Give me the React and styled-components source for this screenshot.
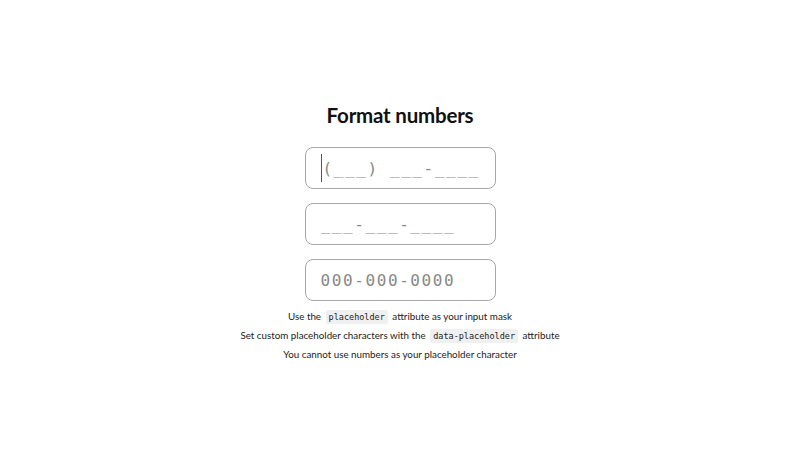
import React from 'react';
import styled, { createGlobalStyle } from 'styled-components';

const GlobalStyle = createGlobalStyle`
  body {
    margin: 0;
    background: #fff;
    font-family: Lato, "Liberation Sans", sans-serif;
    color: #111;
  }
`;

const Page = styled.main`
  display: flex;
  flex-direction: column;
  align-items: center;
  padding-top: 103px;
`;

const Title = styled.h1`
  margin: 0 0 20px;
  font-size: 20.5px;
  line-height: 24px;
  font-weight: 700;
  letter-spacing: -0.2px;
`;

const Fields = styled.div`
  display: flex;
  flex-direction: column;
  gap: 14px;
  margin-bottom: 6px;
`;

const Field = styled.div`
  position: relative;
`;

// fake text cursor for the focused field
const Caret = styled.span`
  position: absolute;
  left: 16px;
  top: 7px;
  width: 1px;
  height: 28px;
  background: #555;
`;

const MaskInput = styled.input`
  display: block;
  width: 191px;
  height: 42px;
  box-sizing: border-box;
  padding: 0 8px 0 ${(p) => (p.$focused ? 17 : 15)}px;
  border: 1.5px solid #a8a8a8;
  border-radius: 8px;
  font-family: "DejaVu Sans Mono", monospace;
  font-size: 16px;
  letter-spacing: 1.6px;
  color: #555;
  outline: none;
  &::placeholder {
    color: #888;
  }
`;

const Note = styled.p`
  margin: 0;
  font-size: 9.8px;
  line-height: 18px;
  color: #222;
  text-align: center;
`;

const Code = styled.code`
  font-family: "DejaVu Sans Mono", monospace;
  font-size: 8.5px;
  background: #f0f0f0;
  padding: 2px 3px;
  margin: 0 2px;
  border-radius: 2px;
`;

export default function App() {
  return (
    <>
      <GlobalStyle />
      <Page>
        <Title>Format numbers</Title>
        <Fields>
          <Field>
            <MaskInput $focused type="tel" placeholder="(___) ___-____" />
            <Caret />
          </Field>
          <Field>
            <MaskInput type="tel" placeholder="___-___-____" />
          </Field>
          <Field>
            <MaskInput type="tel" placeholder="000-000-0000" />
          </Field>
        </Fields>
        <Note>
          Use the <Code>placeholder</Code> attribute as your input mask
        </Note>
        <Note>
          Set custom placeholder characters with the <Code>data-placeholder</Code> attribute
        </Note>
        <Note>You cannot use numbers as your placeholder character</Note>
      </Page>
    </>
  );
}
